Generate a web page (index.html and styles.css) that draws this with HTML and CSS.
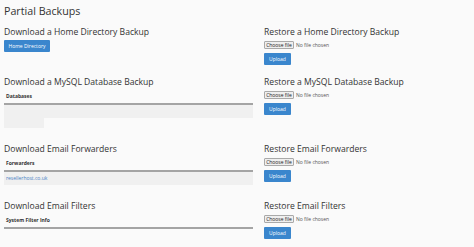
FILE: index.html
```html
<!DOCTYPE html>
<html lang="en">
<head>
<meta charset="utf-8">
<title>Partial Backups</title>
<link rel="stylesheet" href="styles.css">
</head>
<body>
<div class="page">
  <h1 class="title">Partial Backups</h1>

  <div class="row row-1">
    <section class="cell">
      <h2 class="heading">Download a Home Directory Backup</h2>
      <button class="btn btn-wide">Home Directory</button>
    </section>
    <section class="cell">
      <h2 class="heading">Restore a Home Directory Backup</h2>
      <div class="file"><span class="file-btn">Choose file</span><span class="file-name">No file chosen</span></div>
      <button class="btn">Upload</button>
    </section>
  </div>

  <div class="row row-2">
    <section class="cell">
      <h2 class="heading">Download a MySQL Database Backup</h2>
      <div class="table">
        <div class="thead">Databases</div>
        <div class="trow"></div>
        <div class="tfoot"></div>
      </div>
    </section>
    <section class="cell">
      <h2 class="heading">Restore a MySQL Database Backup</h2>
      <div class="file"><span class="file-btn">Choose file</span><span class="file-name">No file chosen</span></div>
      <button class="btn">Upload</button>
    </section>
  </div>

  <div class="row row-3">
    <section class="cell">
      <h2 class="heading">Download Email Forwarders</h2>
      <div class="table">
        <div class="thead">Forwarders</div>
        <div class="trow"><a class="link" href="#">resellerhost.co.uk</a></div>
      </div>
    </section>
    <section class="cell">
      <h2 class="heading">Restore Email Forwarders</h2>
      <div class="file"><span class="file-btn">Choose file</span><span class="file-name">No file chosen</span></div>
      <button class="btn">Upload</button>
    </section>
  </div>

  <div class="row row-4">
    <section class="cell">
      <h2 class="heading">Download Email Filters</h2>
      <div class="table">
        <div class="thead">System Filter Info</div>
      </div>
    </section>
    <section class="cell">
      <h2 class="heading">Restore Email Filters</h2>
      <div class="file"><span class="file-btn">Choose file</span><span class="file-name">No file chosen</span></div>
      <button class="btn">Upload</button>
    </section>
  </div>
</div>
</body>
</html>
```

FILE: styles.css
```css
html, body {
  margin: 0;
  padding: 0;
  background: #fafafa;
}
body {
  font-family: "Open Sans", "Liberation Sans", sans-serif;
  color: #333;
}
.page {
  padding: 2px 4px 0 4px;
}
.title {
  margin: 0;
  font-size: 10.7px;
  line-height: 18px;
  font-weight: 400;
  color: #333;
}
.row {
  display: grid;
  grid-template-columns: 249px 1fr;
  column-gap: 11px;
  align-items: start;
}
.row-1 { margin-top: 6px; height: 50px; }
.row-2 { height: 67px; }
.row-3 { height: 57px; }
.cell {
  display: flex;
  flex-direction: column;
  align-items: flex-start;
}
.heading {
  margin: 0;
  font-size: 8.6px;
  line-height: 12px;
  font-weight: 400;
  color: #333;
  white-space: nowrap;
}
.btn {
  margin: 2px 0 0 0;
  height: 12px;
  padding: 0;
  border: 0;
  border-radius: 1px;
  background: #3a86cd;
  color: #fff;
  font-family: inherit;
  font-size: 5px;
  line-height: 12px;
  white-space: nowrap;
}
.file + .btn {
  margin-top: 4px;
  width: 27px;
}
.btn-wide {
  width: 46px;
}
.file {
  margin-top: 3px;
  height: 8px;
  display: flex;
  align-items: center;
  gap: 2px;
  font-size: 5px;
  white-space: nowrap;
}
.file-btn {
  display: flex;
  align-items: center;
  justify-content: center;
  height: 6px;
  width: 28px;
  background: #efefef;
  border: 1px solid #a9a9a9;
  border-radius: 1px;
  color: #222;
}
.file-name {
  color: #555;
}
.table {
  margin-top: 2px;
  width: 249px;
}
.thead {
  height: 13px;
  line-height: 13px;
  padding-left: 2px;
  font-size: 5px;
  font-weight: 700;
  color: #333;
  border-bottom: 2px solid #a4a4a4;
}
.trow {
  height: 13px;
  line-height: 13px;
  padding-left: 2px;
  background: #f0f0f0;
  font-size: 5px;
}
.tfoot {
  width: 40px;
  height: 10px;
  background: #f0f0f0;
}
.link {
  color: #4a82c4;
  text-decoration: none;
}
```
